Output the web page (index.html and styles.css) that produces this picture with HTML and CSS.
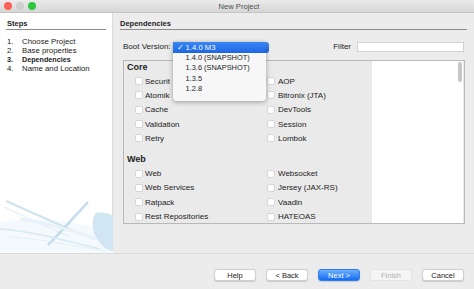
FILE: index.html
```html
<!DOCTYPE html>
<html>
<head>
  <title>New Project</title>
  <link rel="stylesheet" href="styles.css">
</head>
<body>
  <div class="window">
    <div class="titlebar">
      <div class="lights">
        <span class="light red"></span>
        <span class="light off"></span>
        <span class="light green"></span>
      </div>
      <div class="title">New Project</div>
    </div>

    <div class="main">
      <div class="steps">
        <h3>Steps</h3>
        <ol class="step-list">
          <li><span class="num">1.</span>Choose Project</li>
          <li><span class="num">2.</span>Base properties</li>
          <li class="current"><span class="num">3.</span>Dependencies</li>
          <li><span class="num">4.</span>Name and Location</li>
        </ol>
        <svg class="swoosh" width="113" height="60" viewBox="0 0 113 60">
          <path d="M0 30 C30 22 70 26 113 40 L113 60 L0 60 Z" fill="#f3f9fc"/>
          <path d="M96 20 C106 18 113 22 113 24 L113 58 C106 58 98 50 94 40 C92 32 92 24 96 20 Z" fill="#d0e6f2"/>
          <path d="M6 8 L78 40" stroke="#cfe3ef" stroke-width="2" fill="none"/>
          <path d="M4 14 L70 44" stroke="#e0edf5" stroke-width="1" fill="none"/>
          <path d="M88 9 C76 22 62 38 48 52" stroke="#c3dcec" stroke-width="2.5" fill="none"/>
          <path d="M0 36 C30 38 60 46 100 56" stroke="#d8e9f3" stroke-width="1.5" fill="none"/>
          <path d="M10 44 C40 46 70 52 105 58" stroke="#e4f0f7" stroke-width="1" fill="none"/>
          <path d="M20 26 C45 30 70 36 96 46" stroke="#e8f2f8" stroke-width="3" fill="none"/>
        </svg>
      </div>

      <div class="content">
        <h3>Dependencies</h3>

        <div class="toolbar">
          <span class="label">Boot Version:</span>
          <div class="combo">
            <div class="combo-box"></div>
            <div class="popup">
              <div class="option selected"><span class="check">&#10003;</span>1.4.0 M3</div>
              <div class="option"><span class="check"></span>1.4.0 (SNAPSHOT)</div>
              <div class="option"><span class="check"></span>1.3.6 (SNAPSHOT)</div>
              <div class="option"><span class="check"></span>1.3.5</div>
              <div class="option"><span class="check"></span>1.2.8</div>
            </div>
          </div>
          <span class="label filter-label">Filter</span>
          <input class="filter" type="text">
        </div>

        <div class="deps-box">
          <div class="cats">
            <div class="cat-title">Core</div>
            <div class="grid">
              <label class="under"><span class="cb"></span><span class="txt">Security</span></label>
              <label><span class="cb"></span>AOP</label>
              <label class="under"><span class="cb"></span><span class="txt">Atomikos (JTA)</span></label>
              <label><span class="cb"></span>Bitronix (JTA)</label>
              <label><span class="cb"></span>Cache</label>
              <label><span class="cb"></span>DevTools</label>
              <label><span class="cb"></span>Validation</label>
              <label><span class="cb"></span>Session</label>
              <label><span class="cb"></span>Retry</label>
              <label><span class="cb"></span>Lombok</label>
            </div>
            <div class="cat-title web">Web</div>
            <div class="grid">
              <label><span class="cb"></span>Web</label>
              <label><span class="cb"></span>Websocket</label>
              <label><span class="cb"></span>Web Services</label>
              <label><span class="cb"></span>Jersey (JAX-RS)</label>
              <label><span class="cb"></span>Ratpack</label>
              <label><span class="cb"></span>Vaadin</label>
              <label><span class="cb"></span>Rest Repositories</label>
              <label><span class="cb"></span>HATEOAS</label>
            </div>
          </div>
          <div class="desc">
            <div class="thumb"></div>
          </div>
        </div>
      </div>
    </div>

    <div class="footer">
      <button>Help</button>
      <button>&lt; Back</button>
      <button class="primary">Next &gt;</button>
      <button class="disabled">Finish</button>
      <button>Cancel</button>
    </div>
  </div>
</body>
</html>
```

FILE: styles.css
```css
body {
  margin: 0;
  padding: 0;
  font-family: "Liberation Sans", Arial, sans-serif;
  color: #222;
  background: #ececec;
}

.window {
  width: 474px;
  height: 289px;
  display: flex;
  flex-direction: column;
  background: #ececec;
  overflow: hidden;
}

.titlebar {
  height: 13px;
  flex: none;
  display: flex;
  align-items: center;
  background: linear-gradient(#ebebeb, #d6d6d6);
  border-bottom: 1px solid #c4c4c4;
  box-sizing: border-box;
}

.lights {
  display: flex;
  gap: 4px;
  padding-left: 4px;
  width: 100px;
}

.light {
  width: 8px;
  height: 8px;
  border-radius: 50%;
}

.light.red { background: #fb5f57; }
.light.off { background: #cfcfcf; }
.light.green { background: #2ec840; }

.title {
  flex: 1;
  text-align: center;
  font-size: 7.6px;
  color: #4d4d4d;
  margin-right: 100px;
}

.main {
  height: 240px;
  flex: none;
  display: flex;
}

.steps {
  width: 113px;
  background: #fff;
  border-right: 1px solid #dcdcdc;
  box-sizing: border-box;
  display: flex;
  flex-direction: column;
}

h3 {
  margin: 6px 0 0;
  font-size: 7.5px;
  line-height: 10px;
  font-weight: bold;
  border-bottom: 1px solid #8c8c8c;
}

.steps h3 {
  margin-left: 6px;
  margin-right: 6px;
  padding-left: 1px;
}

.step-list {
  list-style: none;
  margin: 7px 0 0;
  padding: 0 0 0 7px;
  font-size: 7.8px;
  line-height: 9px;
}

.step-list .num {
  display: inline-block;
  width: 15px;
}

.step-list .current {
  font-weight: bold;
  font-size: 7.2px;
}

.swoosh {
  margin-top: auto;
  display: block;
}

.content {
  flex: 1;
  padding: 0 7px;
  display: flex;
  flex-direction: column;
}

.toolbar {
  display: flex;
  align-items: center;
  height: 12px;
  margin: 11px 3px 0 3px;
  font-size: 8px;
}

.label {
  line-height: 12px;
}

.combo {
  position: relative;
  margin-left: 2px;
  width: 96px;
  height: 11px;
}

.combo-box {
  height: 11px;
  border-radius: 3px;
  background: linear-gradient(#4f94f5, #1c67e6);
}

.popup {
  position: absolute;
  top: 0;
  left: 0;
  width: 93px;
  padding-bottom: 6px;
  background: #f7f7f7;
  border-radius: 0 0 4px 4px;
  box-shadow: 0 1px 5px rgba(0, 0, 0, 0.35);
  font-size: 7.4px;
  z-index: 2;
}

.option {
  height: 10.5px;
  line-height: 10.5px;
  display: flex;
}

.option.selected {
  height: 11px;
  line-height: 11px;
  background: linear-gradient(#3a86f3, #1d66e4);
  color: #fff;
  font-size: 7.7px;
}

.check {
  width: 13px;
  padding-left: 4px;
  box-sizing: border-box;
}

.filter-label {
  margin-left: auto;
}

.filter {
  margin-left: 6px;
  width: 107px;
  height: 10px;
  box-sizing: border-box;
  border: 1px solid #d2d2d2;
  background: #fff;
  padding: 0;
}

.deps-box {
  margin: 7px 2px 0 3px;
  height: 164px;
  border: 1px solid #b9b9b9;
  box-sizing: border-box;
  display: flex;
  background: #eaeaea;
  padding-right: 1px;
}

.cats {
  flex: 1;
  padding-left: 3px;
  font-size: 8px;
}

.cat-title {
  font-size: 9px;
  font-weight: bold;
  line-height: 13px;
  height: 13px;
}

.cat-title.web {
  margin-top: 7px;
  height: 14px;
  line-height: 14px;
}

.grid {
  display: grid;
  grid-template-columns: 132px 1fr;
  grid-auto-rows: 14.3px;
  margin-left: 8px;
}

.grid label {
  display: flex;
  align-items: center;
  gap: 2px;
  white-space: nowrap;
}

.grid label:nth-child(even) {
  gap: 3px;
}

/* rows that sit under the open popup are cut at its left edge */
.grid label.under .txt {
  width: 25px;
  overflow: hidden;
}

.cb {
  width: 8px;
  height: 8px;
  flex: none;
  background: #fff;
  border: 1px solid #d6d6d6;
  border-radius: 2px;
  box-sizing: border-box;
}

.desc {
  width: 91px;
  background: #fff;
  display: flex;
  justify-content: flex-end;
  padding: 1px 1px 0 0;
  box-sizing: border-box;
}

.thumb {
  width: 4px;
  height: 20px;
  border-radius: 2px;
  background: #c6c6c6;
}

.footer {
  flex: 1;
  border-top: 1px solid #dadada;
  display: flex;
  justify-content: flex-end;
  align-items: flex-start;
  gap: 10px;
  padding: 15px 10px 0 0;
}

button {
  width: 42px;
  height: 12px;
  padding: 0;
  border: 1px solid #cfcfcf;
  border-radius: 3px;
  background: #fff;
  font-family: "Liberation Sans", Arial, sans-serif;
  font-size: 7.5px;
  color: #222;
  box-shadow: 0 0.5px 1px rgba(0, 0, 0, 0.15);
}

button.primary {
  background: linear-gradient(#6db0fb, #116cf4);
  border-color: #2f7ef0;
  color: #fff;
}

button.disabled {
  background: #f5f5f5;
  color: #b3b3b3;
  box-shadow: none;
  border-color: #e3e3e3;
}
```
